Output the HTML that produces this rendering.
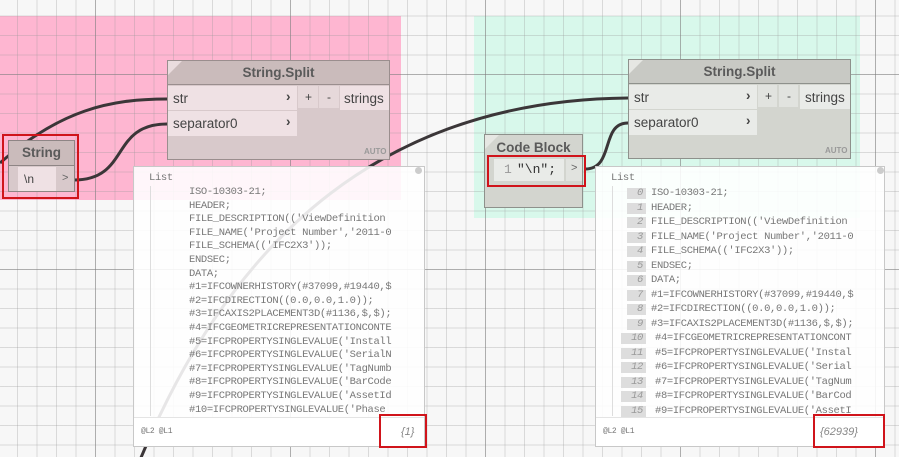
<!DOCTYPE html>
<html><head><meta charset="utf-8"><style>
*{margin:0;padding:0;box-sizing:border-box}
body{width:899px;height:457px;overflow:hidden;background:#f7f7f7;position:relative;font-family:"Liberation Sans",sans-serif}
.abs{position:absolute}
.grid{position:absolute;left:0;top:0;width:899px;height:457px;
background-image:
linear-gradient(to right,rgba(120,120,120,.45) 1px,transparent 1px),
linear-gradient(to bottom,rgba(120,120,120,.45) 1px,transparent 1px),
linear-gradient(to right,rgba(150,150,150,.3) 1px,transparent 1px),
linear-gradient(to bottom,rgba(150,150,150,.3) 1px,transparent 1px);
background-size:195px 195px,195px 195px,19.5px 19.5px,19.5px 19.5px;
background-position:95px 74px,95px 74px,95px 74px,95px 74px}
.t{position:absolute;font-size:13.5px;color:#444;white-space:nowrap}
.h{font-weight:bold;color:#5a5a5a}
.mono{font-family:"Liberation Mono",monospace;font-size:10.5px;color:#777;white-space:pre;letter-spacing:-0.35px}
.red{position:absolute;border:2px solid #d0141b}
.bub{position:absolute;background:rgba(255,255,255,.88);border:1px solid #c8c8c8}
.ln{position:absolute;height:14.5px;line-height:14.5px}
.ix{position:absolute;background:#ddd;color:#999;font-style:italic;text-align:right;padding-right:3px;height:11px;line-height:11px;top:2px}
</style></head><body>
<div class="abs" style="left:0;top:16px;width:401px;height:184px;background:#feb6d1"></div>
<div class="abs" style="left:474px;top:16px;width:386px;height:202px;background:#d8f8eb"></div>
<div class="grid"></div>

<svg class="abs" style="left:0;top:0" width="899" height="457">
<g fill="none" stroke="#3b3638" stroke-width="3">
<path d="M0,163 C60,110 110,99 167,99"/>
<path d="M74,180 C130,180 110,124 167,124"/>
<path d="M140,460 C235,230 390,100 628,98"/>
<path d="M585,169 C615,169 600,123 628,123"/>
</g></svg>

<!-- left String.Split -->
<div class="abs" style="left:167px;top:60px;width:223px;height:100px;background:#d8c9cb;border:1px solid #9a8e8e"></div>
<div class="abs" style="left:168px;top:61px;width:221px;height:24px;background:#cabbbb;border-bottom:1px solid #9a8e8e"></div>
<svg class="abs" style="left:168px;top:61px" width="14" height="14"><path d="M0,0 H14 L0,14Z" fill="#eadcde"/></svg>
<div class="t h" style="left:168px;top:65px;width:221px;text-align:center">String.Split</div>
<div class="abs" style="left:168px;top:86px;width:129px;height:24px;background:#efe1e4"></div>
<div class="abs" style="left:168px;top:111px;width:129px;height:25px;background:#efe1e4"></div>
<div class="abs" style="left:298px;top:86px;width:20px;height:22px;background:#e6d8da"></div>
<div class="abs" style="left:319px;top:86px;width:20px;height:22px;background:#e6d8da"></div>
<div class="abs" style="left:340px;top:86px;width:49px;height:24px;background:#efe1e4"></div>
<div class="t" style="left:173px;top:91px">str</div>
<div class="t" style="left:173px;top:116px">separator0</div>
<div class="t" style="left:286px;top:89px;font-weight:bold;color:#444">›</div>
<div class="t" style="left:286px;top:114px;font-weight:bold;color:#444">›</div>
<div class="t" style="left:305px;top:90px;font-size:12px">+</div>
<div class="t" style="left:327px;top:90px;font-size:12px">-</div>
<div class="t" style="left:344px;top:91px">strings</div>
<div class="t" style="left:364px;top:147px;font-size:8px;font-weight:bold;color:#999">AUTO</div>

<!-- right String.Split -->
<div class="abs" style="left:628px;top:59px;width:223px;height:100px;background:#d3d5cf;border:1px solid #8e918c"></div>
<div class="abs" style="left:629px;top:60px;width:221px;height:24px;background:#c8c9c4;border-bottom:1px solid #8e918c"></div>
<svg class="abs" style="left:629px;top:60px" width="14" height="14"><path d="M0,0 H14 L0,14Z" fill="#e6e7e3"/></svg>
<div class="t h" style="left:629px;top:64px;width:221px;text-align:center">String.Split</div>
<div class="abs" style="left:629px;top:85px;width:128px;height:24px;background:#e9ebe8"></div>
<div class="abs" style="left:629px;top:110px;width:128px;height:25px;background:#e9ebe8"></div>
<div class="abs" style="left:758px;top:85px;width:19px;height:22px;background:#e1e3df"></div>
<div class="abs" style="left:779px;top:85px;width:19px;height:22px;background:#e1e3df"></div>
<div class="abs" style="left:800px;top:85px;width:50px;height:24px;background:#e9ebe8"></div>
<div class="t" style="left:634px;top:90px">str</div>
<div class="t" style="left:634px;top:115px">separator0</div>
<div class="t" style="left:746px;top:88px;font-weight:bold">›</div>
<div class="t" style="left:746px;top:113px;font-weight:bold">›</div>
<div class="t" style="left:765px;top:89px;font-size:12px">+</div>
<div class="t" style="left:787px;top:89px;font-size:12px">-</div>
<div class="t" style="left:805px;top:90px">strings</div>
<div class="t" style="left:825px;top:146px;font-size:8px;font-weight:bold;color:#999">AUTO</div>

<!-- String node -->
<div class="abs" style="left:8px;top:140px;width:67px;height:52px;background:#d8c9cb;border:1px solid #8e8585"></div>
<div class="abs" style="left:9px;top:141px;width:65px;height:25px;background:#cabbbb;border-bottom:1px solid #8e8585"></div>
<div class="t h" style="left:9px;top:145px;width:65px;text-align:center">String</div>
<div class="abs" style="left:18px;top:167px;width:38px;height:24px;background:#efe1e4"></div>
<div class="t" style="left:24px;top:172px;font-size:12px">\n</div>
<div class="t" style="left:62px;top:172px;font-size:11px;color:#666">&gt;</div>
<div class="red" style="left:2px;top:134px;width:77px;height:65px"></div>

<!-- Code Block -->
<div class="abs" style="left:484px;top:134px;width:99px;height:74px;background:#d3d5cf;border:1px solid #8e918c"></div>
<svg class="abs" style="left:485px;top:135px" width="14" height="14"><path d="M0,0 H14 L0,14Z" fill="#e6e7e3"/></svg>
<div class="t h" style="left:485px;top:140px;width:97px;text-align:center">Code Block</div>
<div class="abs" style="left:494px;top:159px;width:70px;height:22px;background:#e9ebe8"></div>
<div class="abs" style="left:566px;top:159px;width:16px;height:22px;background:#e1e3df"></div>
<div class="t" style="left:504px;top:162px;font-family:'Liberation Mono',monospace;font-size:13px;color:#999">1</div>
<div class="t" style="left:517px;top:162px;font-family:'Liberation Mono',monospace;font-size:13px;color:#333">"\n";</div>
<div class="t" style="left:571px;top:162px;font-size:11px;color:#666">&gt;</div>
<div class="red" style="left:487px;top:155px;width:99px;height:32px"></div>

<!-- left bubble -->
<div class="bub" style="left:133px;top:166px;width:292px;height:281px"></div>
<div class="abs" style="left:150px;top:186px;width:1px;height:230px;background:#ddd"></div>
<div class="mono abs" style="left:149px;top:172px">List</div>
<div class="mono abs" style="left:189px;top:186px;line-height:13.6px;width:230px;height:230px;overflow:hidden">ISO-10303-21;
HEADER;
FILE_DESCRIPTION(('ViewDefinition
FILE_NAME('Project Number','2011-0
FILE_SCHEMA(('IFC2X3'));
ENDSEC;
DATA;
#1=IFCOWNERHISTORY(#37099,#19440,$
#2=IFCDIRECTION((0.0,0.0,1.0));
#3=IFCAXIS2PLACEMENT3D(#1136,$,$);
#4=IFCGEOMETRICREPRESENTATIONCONTE
#5=IFCPROPERTYSINGLEVALUE('Install
#6=IFCPROPERTYSINGLEVALUE('SerialN
#7=IFCPROPERTYSINGLEVALUE('TagNumb
#8=IFCPROPERTYSINGLEVALUE('BarCode
#9=IFCPROPERTYSINGLEVALUE('AssetId
#10=IFCPROPERTYSINGLEVALUE('Phase</div>
<div class="abs" style="left:134px;top:417px;width:290px;height:29px;background:#fff;border-top:1px solid #e4e4e4"></div>
<div class="mono abs" style="left:141px;top:427px;font-size:8px">@L2 @L1</div>
<div class="t" style="left:401px;top:426px;font-size:11px;font-style:italic;color:#888">{1}</div>
<div class="red" style="left:379px;top:414px;width:48px;height:34px"></div>

<!-- right bubble -->
<div class="bub" style="left:595px;top:166px;width:290px;height:281px"></div>
<div class="abs" style="left:612px;top:186px;width:1px;height:230px;background:#ddd"></div>
<div class="mono abs" style="left:611px;top:172px">List</div>
<div class="abs mono" style="left:596px;top:186px;width:288px;height:231px;overflow:hidden">
<div class="ln" style="top:0"><span class="ix" style="left:31px;width:19px">0</span><span class="abs" style="left:55px">ISO-10303-21;</span></div>
<div class="ln" style="top:14.5px"><span class="ix" style="left:31px;width:19px">1</span><span class="abs" style="left:55px">HEADER;</span></div>
<div class="ln" style="top:29px"><span class="ix" style="left:31px;width:19px">2</span><span class="abs" style="left:55px">FILE_DESCRIPTION(('ViewDefinition</span></div>
<div class="ln" style="top:43.5px"><span class="ix" style="left:31px;width:19px">3</span><span class="abs" style="left:55px">FILE_NAME('Project Number','2011-0</span></div>
<div class="ln" style="top:58px"><span class="ix" style="left:31px;width:19px">4</span><span class="abs" style="left:55px">FILE_SCHEMA(('IFC2X3'));</span></div>
<div class="ln" style="top:72.5px"><span class="ix" style="left:31px;width:19px">5</span><span class="abs" style="left:55px">ENDSEC;</span></div>
<div class="ln" style="top:87px"><span class="ix" style="left:31px;width:19px">6</span><span class="abs" style="left:55px">DATA;</span></div>
<div class="ln" style="top:101.5px"><span class="ix" style="left:31px;width:19px">7</span><span class="abs" style="left:55px">#1=IFCOWNERHISTORY(#37099,#19440,$</span></div>
<div class="ln" style="top:116px"><span class="ix" style="left:31px;width:19px">8</span><span class="abs" style="left:55px">#2=IFCDIRECTION((0.0,0.0,1.0));</span></div>
<div class="ln" style="top:130.5px"><span class="ix" style="left:31px;width:19px">9</span><span class="abs" style="left:55px">#3=IFCAXIS2PLACEMENT3D(#1136,$,$);</span></div>
<div class="ln" style="top:145px"><span class="ix" style="left:25px;width:25px">10</span><span class="abs" style="left:59px">#4=IFCGEOMETRICREPRESENTATIONCONT</span></div>
<div class="ln" style="top:159.5px"><span class="ix" style="left:25px;width:25px">11</span><span class="abs" style="left:59px">#5=IFCPROPERTYSINGLEVALUE('Instal</span></div>
<div class="ln" style="top:174px"><span class="ix" style="left:25px;width:25px">12</span><span class="abs" style="left:59px">#6=IFCPROPERTYSINGLEVALUE('Serial</span></div>
<div class="ln" style="top:188.5px"><span class="ix" style="left:25px;width:25px">13</span><span class="abs" style="left:59px">#7=IFCPROPERTYSINGLEVALUE('TagNum</span></div>
<div class="ln" style="top:203px"><span class="ix" style="left:25px;width:25px">14</span><span class="abs" style="left:59px">#8=IFCPROPERTYSINGLEVALUE('BarCod</span></div>
<div class="ln" style="top:217.5px"><span class="ix" style="left:25px;width:25px">15</span><span class="abs" style="left:59px">#9=IFCPROPERTYSINGLEVALUE('AssetI</span></div>
</div>
<div class="abs" style="left:596px;top:417px;width:288px;height:29px;background:#fff;border-top:1px solid #e4e4e4"></div>
<div class="mono abs" style="left:603px;top:427px;font-size:8px">@L2 @L1</div>
<div class="t" style="left:820px;top:426px;font-size:11px;font-style:italic;color:#888">{62939}</div>
<div class="red" style="left:813px;top:414px;width:72px;height:34px"></div>
<div class="abs" style="left:877px;top:167px;width:7px;height:7px;border-radius:50%;background:#ccc"></div>
<div class="abs" style="left:415px;top:167px;width:7px;height:7px;border-radius:50%;background:#ccc"></div>
</body></html>
